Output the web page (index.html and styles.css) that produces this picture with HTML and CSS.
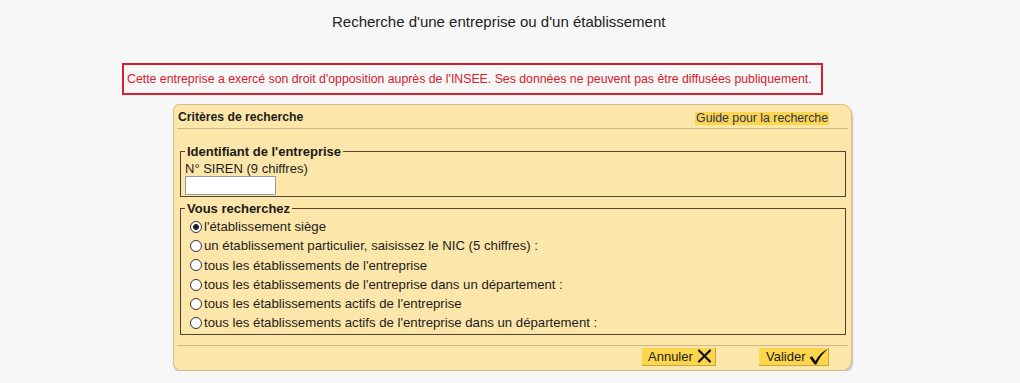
FILE: index.html
```html
<!DOCTYPE html>
<html lang="fr">
<head>
<meta charset="utf-8">
<title>Recherche d'une entreprise</title>
<link rel="stylesheet" href="styles.css">
</head>
<body>
<h1 class="title">Recherche d'une entreprise ou d'un établissement</h1>
<div class="alert">Cette entreprise a exercé son droit d'opposition auprès de l'INSEE. Ses données ne peuvent pas être diffusées publiquement.</div>
<form class="panel">
  <div class="panel-head">
    <span class="panel-title">Critères de recherche</span>
    <a class="guide" href="#">Guide pour la recherche</a>
  </div>
  <fieldset class="box">
    <legend>Identifiant de l'entreprise</legend>
    <div class="label">N° SIREN (9 chiffres)</div>
    <input class="siren" type="text">
  </fieldset>
  <fieldset class="box box-radios">
    <legend>Vous recherchez</legend>
    <label class="row"><input type="radio" name="t" checked>l'établissement siège</label>
    <label class="row"><input type="radio" name="t">un établissement particulier, saisissez le NIC (5 chiffres) :</label>
    <label class="row"><input type="radio" name="t">tous les établissements de l'entreprise</label>
    <label class="row"><input type="radio" name="t">tous les établissements de l'entreprise dans un département :</label>
    <label class="row"><input type="radio" name="t">tous les établissements actifs de l'entreprise</label>
    <label class="row"><input type="radio" name="t">tous les établissements actifs de l'entreprise dans un département :</label>
  </fieldset>
  <div class="panel-foot">
    <button type="button" class="btn btn-cancel">Annuler
      <svg class="ico" width="15" height="14" viewBox="0 0 15 14"><path d="M2 1.5 L13 12.5 M13 1.5 L2 12.5" stroke="#111" stroke-width="2.2" fill="none" stroke-linecap="round"/></svg>
    </button>
    <button type="button" class="btn btn-ok">Valider
      <svg class="ico" width="21" height="17" viewBox="0 0 21 17"><path d="M1.5 9.5 L4 8.2 L7.5 13 C10.5 7.5 14.5 3.5 20 0.8 C15.5 4.8 11.5 9.8 8.3 16.5 L6.6 16.5 Z" fill="#111"/></svg>
    </button>
  </div>
</form>
</body>
</html>
```
FILE: styles.css
```css
html, body {
  margin: 0;
  padding: 0;
}
body {
  background: #f7f7f7;
  font-family: "Liberation Sans", Arial, sans-serif;
  color: #1c1c1c;
  width: 1020px;
  padding-top: 12px;
}
.title {
  margin: 0;
  font-size: 15px;
  line-height: 18px;
  font-weight: normal;
  text-align: left;
  color: #222;
  padding-left: 332px;
  padding-top: 1px;
}
.alert {
  margin: 32px 0 0 122px;
  width: 701px;
  box-sizing: border-box;
  height: 32px;
  border: 2px solid #d5202e;
  color: #d5202e;
  font-size: 12.3px;
  line-height: 14px;
  padding: 7px 0 0 3px;
}
.panel {
  margin: 9px 0 0 173px;
  width: 679px;
  height: 267px;
  box-sizing: border-box;
  background: #fde6a9;
  border: 1px solid #d8bb8e;
  border-radius: 6px 10px 10px 8px;
  box-shadow: 1px 2px 2px rgba(120, 100, 70, 0.35);
  display: flex;
  flex-direction: column;
}
.panel-head {
  margin: 0 3px;
  height: 23px;
  border-bottom: 1px solid #cfb489;
  display: flex;
  justify-content: space-between;
  align-items: flex-start;
}
.panel-title {
  font-size: 12.2px;
  font-weight: bold;
  line-height: 14px;
  padding: 5px 0 0 1px;
}
.guide {
  margin: 7px 19px 0 0;
  background: #fbd54a;
  color: #303060;
  text-decoration: none;
  font-size: 12.3px;
  line-height: 13px;
  padding: 0 1px;
}
.box {
  margin: 15px 5px 0 6px;
  padding: 0 4px 1px 4px;
  border: 1px solid #4d4536;
  min-width: 0;
}
.box legend {
  font-size: 13px;
  font-weight: bold;
  line-height: 15px;
  padding: 0 2px;
  color: #1a1a1a;
}
.label {
  font-size: 13px;
  line-height: 14px;
  margin-top: 3px;
}
.siren {
  display: block;
  margin: 0;
  width: 91px;
  height: 19px;
  box-sizing: border-box;
  border: 1px solid #9a9a9a;
  background: #fff;
  padding: 0;
}
.box-radios {
  margin-top: 4px;
  padding-top: 1px;
  padding-bottom: 1px;
}
.row {
  display: flex;
  align-items: center;
  font-size: 13.2px;
  line-height: 19.3px;
  height: 19.3px;
  color: #1c1c1c;
}
.row input {
  appearance: none;
  -webkit-appearance: none;
  width: 12px;
  height: 12px;
  margin: 0 2px 0 5px;
  border: 1px solid #333;
  border-radius: 50%;
  background: #fff;
  box-sizing: border-box;
  flex: none;
}
.row input:checked {
  background: radial-gradient(circle, #222 0, #222 2.6px, #fff 3.2px);
}
.panel-foot {
  margin: 10px 3px 0 3px;
  border-top: 1px solid #cfb489;
  padding: 2px 19px 0 0;
  display: flex;
  justify-content: flex-end;
  gap: 43px;
}
.btn {
  display: flex;
  align-items: center;
  height: 18px;
  padding: 0 3px 0 6px;
  background: #fbd54a;
  border: none;
  border-right: 1px solid #c9a546;
  border-bottom: 1px solid #c9a546;
  font-family: "Liberation Sans", Arial, sans-serif;
  font-size: 13px;
  color: #1c1c1c;
  gap: 4px;
  cursor: pointer;
}
.btn-cancel {
  width: 74px;
  padding-left: 6px;
}
.btn-ok {
  width: 70px;
  padding-left: 7px;
  gap: 2px;
}
.ico {
  display: block;
  flex: none;
}
```
